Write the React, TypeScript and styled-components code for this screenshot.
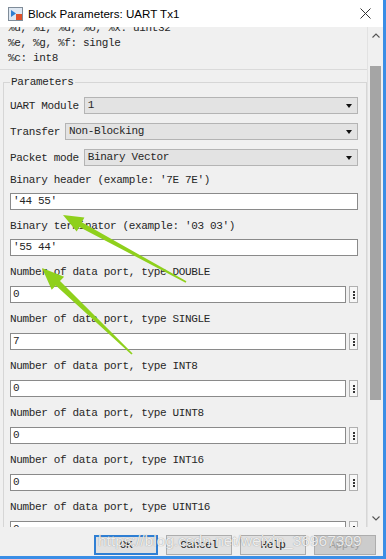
import React from 'react';
import styled, { createGlobalStyle } from 'styled-components';

const GlobalStyle = createGlobalStyle`
  html, body {
    margin: 0;
    padding: 0;
    background: #ffffff;
  }
  * {
    box-sizing: border-box;
  }
`;

const mono = `'Liberation Mono', 'Noto Sans CJK SC', monospace`;

const Window = styled.div`
  position: relative;
  width: 386px;
  height: 559px;
  display: flex;
  flex-direction: column;
  border-right: 3px solid #3a8ee6;
  border-bottom: 3px solid #3a8ee6;
  background: #f0f0f0;
  overflow: hidden;
`;
const TitleBar = styled.div`
  height: 27px;
  flex-shrink: 0;
  display: flex;
  align-items: center;
  padding-left: 8px;
  background: #ffffff;
  font-family: 'Liberation Sans', Arial, sans-serif;
  font-size: 11.6px;
  color: #000;
`;
const Title = styled.span`
  flex-grow: 1;
  margin-left: 5px;
`;
const CloseButton = styled.div`
  width: 30px;
  height: 27px;
  display: flex;
  align-items: center;
  justify-content: center;
  margin-right: 3px;
`;
const Body = styled.div`
  flex: 1;
  min-height: 0;
  display: flex;
`;
const ScrollPane = styled.div`
  flex: 1;
  min-width: 0;
  overflow: hidden;
  font-family: ${mono};
  font-size: 11px;
  letter-spacing: -0.35px;
  color: #262626;
`;
const Description = styled.div`
  padding: 0 0 3px 8px;
  border-bottom: 1px solid #dadada;
  line-height: 15px;
  white-space: pre;
`;
const DescriptionLines = styled.div`
  margin-top: -6px;
`;
const GroupBox = styled.fieldset`
  margin: 5px 0 0 3px;
  padding: 0 8px 0 6px;
  border: 1px solid #d6d6d6;
  border-bottom: none;
  min-width: 0;
`;
const Legend = styled.legend`
  padding: 0 1px;
  line-height: 14px;
`;
const Stack = styled.div`
  display: flex;
  flex-direction: column;
  padding-top: 8px;
`;
const SelectRow = styled.div`
  display: flex;
  align-items: center;
  gap: 5px;
  height: 17px;
  margin-bottom: 9px;
`;
const Label = styled.div`
  line-height: 14px;
  height: 14px;
  white-space: nowrap;
`;
const SelectBox = styled.div`
  position: relative;
  flex: 1;
  height: 17px;
  padding-left: 3px;
  line-height: 15px;
  background: #e3e3e3;
  border: 1px solid #b4b4b4;
  &::after {
    content: '';
    position: absolute;
    right: 5px;
    top: 6px;
    border-left: 3px solid transparent;
    border-right: 3px solid transparent;
    border-top: 4px solid #111;
  }
`;
const FieldGroup = styled.div<{ $gap: number; $after: number }>`
  display: flex;
  flex-direction: column;
  gap: ${(p) => p.$gap}px;
  margin-top: ${(p) => p.$after}px;
`;
const InputRow = styled.div`
  display: flex;
  gap: 3px;
`;
const TextInput = styled.div`
  flex: 1;
  height: 17px;
  padding-left: 2px;
  line-height: 15px;
  background: #ffffff;
  border: 1px solid #8a8a8a;
`;
const DotsButton = styled.div`
  width: 9px;
  height: 17px;
  display: flex;
  flex-direction: column;
  align-items: center;
  justify-content: center;
  gap: 1px;
  background: #f7f7f7;
  border: 1px solid #b0b0b0;
`;
const Dot = styled.span`
  width: 2px;
  height: 2px;
  background: #333;
`;
const Scrollbar = styled.div`
  width: 16px;
  flex-shrink: 0;
  display: flex;
  flex-direction: column;
  align-items: center;
  background: #f0f0f0;
  border-left: 1px solid #e2e2e2;
`;
const ScrollArrow = styled.div<{ $height: number }>`
  height: ${(p) => p.$height}px;
  display: flex;
  align-items: center;
  justify-content: center;
`;
const Thumb = styled.div`
  width: 11px;
  height: 334px;
  margin-top: 22px;
  background: #a5a5a5;
`;
const ScrollSpacer = styled.div`
  flex: 1;
`;
const ButtonBar = styled.div`
  height: 29px;
  flex-shrink: 0;
  display: flex;
  align-items: flex-start;
  padding: 8px 0 0 94px;
  gap: 8px;
`;
const DialogButton = styled.div<{ $width: number; $primary?: boolean; $disabled?: boolean }>`
  width: ${(p) => p.$width}px;
  height: 20px;
  display: flex;
  align-items: center;
  justify-content: center;
  font-family: ${mono};
  font-size: 11px;
  letter-spacing: -0.35px;
  color: ${(p) => (p.$disabled ? '#a0a0a0' : '#222')};
  background: ${(p) => (p.$disabled ? '#cccccc' : '#e1e1e1')};
  border: ${(p) => (p.$primary ? '2px solid #2f7fd4' : '1px solid #adadad')};
`;
const Watermark = styled.div`
  position: absolute;
  left: 98px;
  top: 532px;
  font-family: 'Liberation Sans', Arial, sans-serif;
  font-size: 15.5px;
  color: rgba(255, 255, 255, 0.85);
  text-shadow: 0 0 1px rgba(90, 90, 90, 0.7);
  white-space: nowrap;
  pointer-events: none;
`;
const ArrowLayer = styled.svg`
  position: absolute;
  left: 0;
  top: 0;
  pointer-events: none;
`;

// tapered shaft + triangular head, tail -> tip
function arrowPoints(tail: [number, number], tip: [number, number], headLen: number, headHalf: number, shaftHalf: number) {
  const dx = tip[0] - tail[0];
  const dy = tip[1] - tail[1];
  const len = Math.hypot(dx, dy);
  const ux = dx / len;
  const uy = dy / len;
  const nx = -uy;
  const ny = ux;
  const bx = tip[0] - ux * headLen;
  const by = tip[1] - uy * headLen;
  const pts = [
    [tail[0] + nx * 0.8, tail[1] + ny * 0.8],
    [bx + nx * shaftHalf, by + ny * shaftHalf],
    [bx + nx * headHalf, by + ny * headHalf],
    tip,
    [bx - nx * headHalf, by - ny * headHalf],
    [bx - nx * shaftHalf, by - ny * shaftHalf],
    [tail[0] - nx * 0.8, tail[1] - ny * 0.8],
  ];
  return pts.map((p) => `${p[0].toFixed(1)},${p[1].toFixed(1)}`).join(' ');
}

function BlockIcon() {
  return (
    <svg width='15' height='14' viewBox='0 0 15 14'>
      <rect x='0.5' y='0.5' width='14' height='13' fill='#dfe8f2' stroke='#7f8c99' />
      <path d='M3 3 L8 6.5 L3 10 Z' fill='#2f7fd0' />
      <rect x='8' y='7' width='6' height='6' fill='#e0522a' />
    </svg>
  );
}

function Chevron({ up }: { up?: boolean }) {
  return (
    <svg width='8' height='5' viewBox='0 0 8 5'>
      <path d={up ? 'M0.5 4.5 L4 1 L7.5 4.5' : 'M0.5 0.5 L4 4 L7.5 0.5'} fill='none' stroke='#555' strokeWidth='1.1' />
    </svg>
  );
}

function NumberField({ label, value }: { label: string; value: string }) {
  return (
    <FieldGroup $gap={7} $after={9}>
      <Label>{label}</Label>
      <InputRow>
        <TextInput>{value}</TextInput>
        <DotsButton>
          <Dot />
          <Dot />
          <Dot />
        </DotsButton>
      </InputRow>
    </FieldGroup>
  );
}

const numberFields = [
  { label: 'Number of data port, type DOUBLE', value: '0' },
  { label: 'Number of data port, type SINGLE', value: '7' },
  { label: 'Number of data port, type INT8', value: '0' },
  { label: 'Number of data port, type UINT8', value: '0' },
  { label: 'Number of data port, type INT16', value: '0' },
  { label: 'Number of data port, type UINT16', value: '0' },
];

function App() {
  return (
    <>
      <GlobalStyle />
      <Window>
        <TitleBar>
          <BlockIcon />
          <Title>Block Parameters: UART Tx1</Title>
          <CloseButton>
            <svg width='11' height='11' viewBox='0 0 11 11'>
              <path d='M0.5 0.5 L10.5 10.5 M10.5 0.5 L0.5 10.5' stroke='#333' strokeWidth='1' />
            </svg>
          </CloseButton>
        </TitleBar>
        <Body>
          <ScrollPane>
            <Description>
              <DescriptionLines>
                <div>%u, %i, %d, %o, %x: uint32</div>
                <div>%e, %g, %f: single</div>
                <div>%c: int8</div>
              </DescriptionLines>
            </Description>
            <GroupBox>
              <Legend>Parameters</Legend>
              <Stack>
                <SelectRow>
                  <Label>UART Module</Label>
                  <SelectBox>1</SelectBox>
                </SelectRow>
                <SelectRow>
                  <Label>Transfer</Label>
                  <SelectBox>Non-Blocking</SelectBox>
                </SelectRow>
                <SelectRow>
                  <Label>Packet mode</Label>
                  <SelectBox>Binary Vector</SelectBox>
                </SelectRow>
                <FieldGroup $gap={6} $after={-2}>
                  <Label>Binary header (example: '7E 7E')</Label>
                  <TextInput>'44 55'</TextInput>
                </FieldGroup>
                <FieldGroup $gap={6} $after={9}>
                  <Label>Binary terminator (example: '03 03')</Label>
                  <TextInput>'55 44'</TextInput>
                </FieldGroup>
                {numberFields.map((f) => (
                  <NumberField key={f.label} label={f.label} value={f.value} />
                ))}
              </Stack>
            </GroupBox>
          </ScrollPane>
          <Scrollbar>
            <ScrollArrow $height={17}>
              <Chevron up />
            </ScrollArrow>
            <Thumb />
            <ScrollSpacer />
            <ScrollArrow $height={17}>
              <Chevron />
            </ScrollArrow>
          </Scrollbar>
        </Body>
        <ButtonBar>
          <DialogButton $width={64} $primary>OK</DialogButton>
          <DialogButton $width={66}>Cancel</DialogButton>
          <DialogButton $width={66}>Help</DialogButton>
          <DialogButton $width={62} $disabled>Apply</DialogButton>
        </ButtonBar>
        <Watermark>https://blog.csdn.net/weixin_36967309</Watermark>
        <ArrowLayer width='386' height='559' viewBox='0 0 386 559'>
          <polygon points={arrowPoints([186, 282], [63, 215], 20, 8, 2.6)} fill='#8fd01c' />
          <polygon points={arrowPoints([132, 354], [42, 268], 22, 9, 3)} fill='#8fd01c' />
        </ArrowLayer>
      </Window>
    </>
  );
}

export default App;
